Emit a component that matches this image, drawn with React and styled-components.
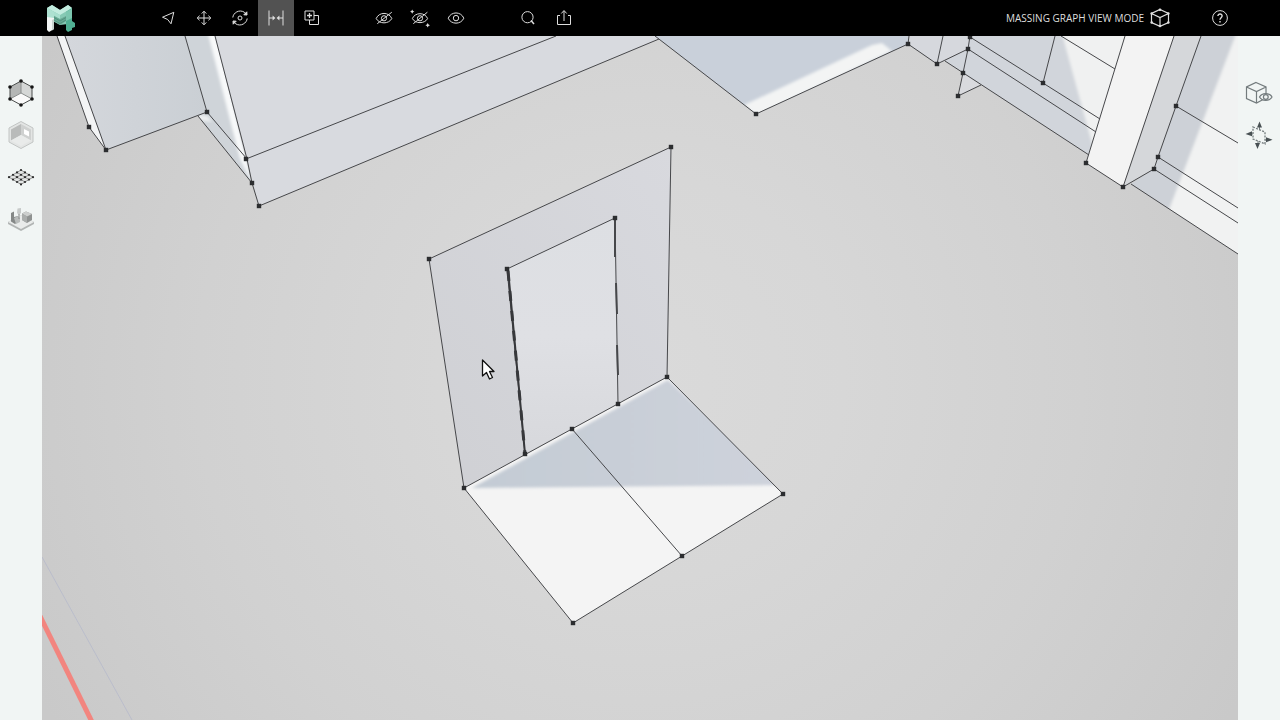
import React from "react";
import styled, { createGlobalStyle } from "styled-components";

const GlobalStyle = createGlobalStyle`
  * { box-sizing: border-box; }
  body { margin: 0; background: #f1f5f4; font-family: "Open Sans", "Noto Sans", sans-serif; }
`;

const Shell = styled.div`
  display: flex;
  flex-direction: column;
  height: 100vh;
`;

const TopBar = styled.header`
  display: flex;
  align-items: center;
  flex: none;
  height: 36px;
  padding: 0 42px;
  background: #000;
  color: #dedede;
`;

const Logo = styled.a`
  display: flex;
  width: 36px;
  margin-right: 72px;
`;

const Tools = styled.nav`
  display: flex;
  gap: 36px;
  margin-right: auto;
`;

const ToolGroup = styled.div`
  display: flex;
`;

const ToolButton = styled.button`
  display: flex;
  align-items: center;
  justify-content: center;
  width: 36px;
  height: 36px;
  padding: 0;
  border: 0;
  color: inherit;
  background: ${(p) => (p.$active ? "#525252" : "transparent")};
`;

const ModeButton = styled.button`
  display: flex;
  align-items: center;
  gap: 6px;
  height: 36px;
  margin-right: 32px;
  padding: 0;
  border: 0;
  background: transparent;
  color: inherit;
  font-family: inherit;
  font-size: 10px;
  line-height: 16px;
  white-space: nowrap;
`;

const Workspace = styled.div`
  display: flex;
  flex: 1;
  min-height: 0;
`;

const SideBar = styled.aside`
  display: flex;
  flex-direction: column;
  flex: none;
  width: 42px;
  padding-top: 36px;
  background: #f1f5f4;
`;

const SideButton = styled.button`
  display: flex;
  align-items: center;
  justify-content: center;
  width: 42px;
  height: 42px;
  padding: 0;
  border: 0;
  background: transparent;
`;

const Viewport = styled.main`
  flex: 1;
  min-width: 0;
  background: #d2d2d2;
`;

const SceneSvg = styled.svg`
  display: block;
  width: 100%;
  height: 100%;
`;

const LineIcon = ({ size = 20, children }) => (
  <svg
    width={size}
    height={size}
    viewBox="0 0 20 20"
    fill="none"
    stroke="currentColor"
    strokeWidth="1"
    strokeLinejoin="round"
    aria-hidden="true"
  >
    {children}
  </svg>
);

const ICONS = {
  select: <path d="M4.5 9.2 15.8 4.3 13 15.8 9.7 11.5Z" />,
  move: (
    <>
      <path d="M3.5 10H16.5M10 3.5V16.5" />
      <path d="M7.7 5.6 10 3.2 12.3 5.6M7.7 14.4 10 16.8 12.3 14.4M5.6 7.7 3.2 10 5.6 12.3M14.4 7.7 16.8 10 14.4 12.3" />
    </>
  ),
  rotate: (
    <>
      <circle cx="10" cy="10" r="2" />
      <path d="M2.8 9.5C3.2 4.8 9.3 1 14.3 4.2L16 6M17.2 10.5C16.8 15.2 10.7 19 5.7 15.8L4 14" />
      <path d="M13.8 6.8 17 7 16.8 3.8ZM6.2 13.2 3 13 3.2 16.2Z" fill="currentColor" />
    </>
  ),
  measure: (
    <>
      <path d="M3 2.5V17.5M17 2.5V17.5M3 10H8M12 10H17" />
      <path d="M6.6 7.6 9.4 10 6.6 12.4ZM13.4 7.6 10.6 10 13.4 12.4Z" fill="currentColor" stroke="none" />
    </>
  ),
  duplicate: (
    <>
      <path d="M3 3H12V12H3ZM7.5 12V16.5H16.5V7.5H12" />
      <path d="M5 7.5H10M7.500 5V10" strokeWidth="1.3" />
    </>
  ),
  hide: (
    <>
      <path d="M2.2 10.5C5 3.7 15 3.7 17.8 10.5C15 16.3 5 16.3 2.2 10.5Z" />
      <circle cx="10" cy="10.3" r="2.6" />
      <path d="M3.3 15.7 17.8 4.2" />
    </>
  ),
  hideOthers: (
    <>
      <path d="M2.4 10.5C5 4.1 15 4.1 17.6 10.5C15 16 5 16 2.4 10.5Z" />
      <circle cx="10" cy="10.3" r="2.6" />
      <path d="M3.3 15.7 17.4 4.2" />
      <path
        d="M2.200 1.400 3 2.900 4.400 3.600 3 4.300 2.200 5.800 1.400 4.300 0 3.600 1.400 2.900ZM17.700 15 18.500 16.500 20 17.200 18.500 17.900 17.700 19.400 16.900 17.900 15.400 17.200 16.900 16.500Z"
        fill="currentColor"
        stroke="none"
      />
    </>
  ),
  show: (
    <>
      <path d="M2.2 10.2C5 3.2 15 3.2 17.8 10.2C15 16.8 5 16.8 2.2 10.2Z" />
      <circle cx="10" cy="10.1" r="2.7" />
    </>
  ),
  search: (
    <>
      <circle cx="9.5" cy="9.2" r="5.6" />
      <path d="M13 12.600 16 16" strokeWidth="1.500" />
    </>
  ),
  share: (
    <>
      <path d="M6 7.5H3.5V16.5H16.5V7.5H14M10 13V3" />
      <path d="M7.3 5.5 10 2.5 12.7 5.5" />
    </>
  ),
  help: (
    <>
      <circle cx="10" cy="10" r="7.4" />
      <path d="M7.9 8.1C7.9 5.2 12.3 5.4 12.1 8C12 9.7 10 9.7 10 11.7M10 13.1V14.6" strokeWidth="1.4" />
    </>
  ),
};

const TOOL_GROUPS = [
  [
    ["select", "Select"],
    ["move", "Move"],
    ["rotate", "Rotate"],
    ["measure", "Measure"],
    ["duplicate", "Duplicate"],
  ],
  [
    ["hide", "Hide"],
    ["hideOthers", "Hide others"],
    ["show", "Show all"],
  ],
  [
    ["search", "Search"],
    ["share", "Share"],
  ],
];

const LogoMark = () => (
  <svg width="36" height="36" viewBox="0 0 36 36" aria-hidden="true">
    <path d="M5 8 10 5 18 10 26 5 30 8V22L26 24 18 25 5 18Z" fill="#86c9b4" />
    <path d="M5 8 10 5 18 10 26 5 30 8 18 15Z" fill="#c3ecdf" />
    <path d="M5 8 18 15V19L5 12Z" fill="#a9dfce" />
    <path d="M12 16 18 19 24 16V21L18 25 12 21Z" fill="#68a893" />
    <path d="M12 17.500 18 21 24 17.500M12 20 18 23.500 24 20" fill="none" stroke="#4b8c78" strokeWidth=".8" />
    <path d="M24 12 30 8V21L33 23V27L30 28V30L26 32 24 30Z" fill="#50ae92" />
    <path d="M24 12 30 8.500V18L24 21Z" fill="#7cc6af" />
    <path d="M5 8 12 12V20L5 20Z" fill="#aee1d1" />
    <path d="M5 17 12 18V29L7 32 5 30Z" fill="#f2f5f4" />
    <path d="M10 20 12 19V29L10 30.500Z" fill="#c9d3cf" />
  </svg>
);

const CubeIcon = () => (
  <svg width="20" height="20" viewBox="0 0 20 20" aria-hidden="true">
    <path
      d="M10 1.5 18.5 5.5V14.5L10 18.3 1.5 14.5V5.5ZM1.5 5.5 10 9.5 18.5 5.5M10 9.5V18.3"
      fill="none"
      stroke="currentColor"
      strokeWidth="1.2"
    />
    {[[10, 1.7], [18.3, 5.5], [18.3, 14.5], [10, 18], [1.7, 14.5], [1.7, 5.5]].map(([x, y]) => (
      <circle key={`${x}-${y}`} cx={x} cy={y} r="1.3" fill="currentColor" />
    ))}
  </svg>
);

const GraphIcon = () => (
  <svg width="30" height="30" viewBox="0 0 30 30" aria-hidden="true">
    <path d="M15 3 26 9V21L15 15Z" fill="#d5d7d6" />
    <path d="M15 3 4 9V21L15 15Z" fill="#b5b7b6" />
    <path d="M4 21 15 15 26 21 15 27Z" fill="#fafafa" />
    <path d="M15 3V15L4 21M15 15 26 21" fill="none" stroke="#8a8d8c" strokeWidth="1" />
    <path d="M15 3 26 9V21L15 27 4 21V9Z" fill="none" stroke="#4a4d4c" strokeWidth="1" />
    {[[15, 3], [26, 9], [26, 21], [15, 27], [4, 21], [4, 9]].map(([x, y]) => (
      <circle key={`${x}-${y}`} cx={x} cy={y} r="1.8" fill="#151515" />
    ))}
  </svg>
);

const SolidIcon = () => (
  <svg width="30" height="30" viewBox="0 0 30 30" aria-hidden="true">
    <path d="M15 1.5 27 8V22L15 28.5 3 22V8Z" fill="#e3e5e4" stroke="#c2c5c4" strokeWidth="1" />
    <path d="M15 4 5 9.5V20.5L15 15Z" fill="#b9bbba" />
    <path d="M15 4 25 9.5V20.5L15 15Z" fill="#cfd1d0" />
    <path d="M5 20.5 15 15 25 20.5 15 26Z" fill="#e9ebea" />
    <path d="M18 9 23 11.500V16.500L18 14Z" fill="#fff" />
  </svg>
);

const GridIcon = () => {
  const dots = [];
  for (let i = 0; i < 4; i += 1) {
    for (let j = 0; j < 4; j += 1) {
      dots.push([15 + (i - j) * 4, 8 + (i + j) * 2.4]);
    }
  }
  return (
    <svg width="30" height="30" viewBox="0 0 30 30" aria-hidden="true">
      <path d="M15 8 27 15.2 15 22.4 3 15.2Z" fill="#e3e5e4" />
      <path
        d="M15 8 27 15.2 15 22.4 3 15.2ZM11 10.4 23 17.6M7 12.8 19 20M19 10.4 7 17.6M23 12.8 11 20"
        fill="none"
        stroke="#777"
        strokeWidth=".8"
      />
      {dots.map(([x, y]) => (
        <circle key={`${x}-${y}`} cx={x} cy={y} r="1.1" fill="#2b2b2b" />
      ))}
    </svg>
  );
};

const FurnitureIcon = () => (
  <svg width="30" height="30" viewBox="0 0 30 30" aria-hidden="true">
    <path d="M2 18 15 11 28 18V20L15 27 2 20Z" fill="#b2b5b4" />
    <path d="M2 18 15 11 28 18 15 25Z" fill="#e9ebea" />
    <path d="M5 9 8 7.500V13L12 12V18L9 20 5 17.500Z" fill="#858887" />
    <path d="M8 14 12 12 14 14V18L10 20Z" fill="#b9bcbb" />
    <path d="M11.500 4.500 15 4V9L13 11 11 9Z" fill="#c7cac9" />
    <path d="M13 10V15" stroke="#888b8a" strokeWidth="1" />
    <path d="M16 9.5 20 7.5 26 10V16L21 19 16 16Z" fill="#8f9291" />
    <path d="M16 9.5 20 7.5 26 10 21 12.5Z" fill="#cdcfce" />
    <path d="M16 9.5 21 12.5V19L16 16Z" fill="#aaadac" />
  </svg>
);

const VisibilityIcon = () => (
  <svg width="30" height="30" viewBox="0 0 30 30" fill="none" stroke="#737b7d" strokeWidth="1.2" aria-hidden="true">
    <path d="M12 4.500 22 9V20L12.5 25 2.5 20.500V9ZM2.5 9 12.5 13.500 22 9M12.5 13.500V25" />
    <path d="M15.5 19C18 14.500 25.500 14.500 28 19C25.500 23.500 18 23.500 15.500 19Z" fill="#f1f5f4" />
    <circle cx="21.8" cy="19" r="2.4" />
  </svg>
);

const SectionIcon = () => (
  <svg width="30" height="30" viewBox="0 0 30 30" fill="none" stroke="#737b7d" aria-hidden="true">
    <path d="M9 7 21 12V24L9 19Z" strokeWidth="1.300" strokeDasharray="2 1.300" />
    <path d="M15.5 6V10M14 21V25M6 14H9M21 20H24" />
    <path
      d="M15.500 1.500 18 7.500H13ZM13.500 29 16 23H11ZM1.500 14 8 11.300V16.300ZM28.500 19.700 22 17.200V22.200Z"
      fill="#485053"
      stroke="none"
    />
  </svg>
);

const EDGES = [
  "M57 36 89 127 106 150M65 36 106 150 207 112 185 36",
  "M207 112 247 159M198 116 252 183M215 36 247 159 252 183 259 206",
  "M246 159 556 36M259 206 659 39M655 36 756 114 908 44 909 36",
  "M908 44 937 64 943 36M937 64 968 49M945 61 1089 155",
  "M970 36 968 49 963 73 958 96 981 85M970 37 1100 119M968 49 1096 132",
  "M1043 83 1055 36M1061 36 1115 69M1125 36 1086 163 1123 187 1174 36",
  "M1123 187 1154 169 1158 157 1176 106 1201 36M1131 184 1238 254",
  "M1158 157 1238 208M1154 169 1238 223M1176 106 1238 143",
];

const NODES = [
  [89, 127], [106, 150], [207, 112], [246, 159], [252, 183], [259, 206],
  [756, 114], [908, 44], [937, 64], [970, 37], [968, 49], [963, 73], [958, 96], [1043, 83],
  [1086, 163], [1123, 187], [1154, 169], [1158, 157], [1176, 106],
  [671, 147], [429, 259], [615, 218], [507, 269], [464, 488], [525, 454], [572, 429],
  [618, 404], [667, 377], [783, 494], [682, 556], [573, 623],
];

const Node = ({ x, y }) => <rect x={x - 2} y={y - 2} width="4" height="4" fill="#2c2d30" stroke="#2c2d30" strokeWidth=".4" />;

const Scene = () => (
  <SceneSvg viewBox="42 36 1196 684" preserveAspectRatio="xMidYMid slice" role="img" aria-label="Massing model">
    <defs>
      <radialGradient id="ground" gradientUnits="userSpaceOnUse" cx="640" cy="378" r="680">
        <stop offset="0" stopColor="#dadada" />
        <stop offset=".3" stopColor="#d7d7d7" />
        <stop offset=".65" stopColor="#d1d1d1" />
        <stop offset="1" stopColor="#c9c9c9" />
      </radialGradient>
      <linearGradient id="leftPanel">
        <stop offset="0" stopColor="#d4d7dc" />
        <stop offset="1" stopColor="#cacfd4" />
      </linearGradient>
      <linearGradient id="wall" x1="0" y1="1" x2="1" y2="0">
        <stop offset="0" stopColor="#cfd0d4" />
        <stop offset="1" stopColor="#d8d9de" />
      </linearGradient>
      <linearGradient id="door" x1="0" y1="1" x2="0" y2="0">
        <stop offset="0" stopColor="#d7d8dc" />
        <stop offset=".5" stopColor="#dfe0e4" />
        <stop offset="1" stopColor="#dddfe3" />
      </linearGradient>
      <linearGradient id="shade">
        <stop offset="0" stopColor="#c3cbd4" />
        <stop offset="1" stopColor="#ced2db" />
      </linearGradient>
      <filter id="softEdge" x="-10%" y="-10%" width="120%" height="120%">
        <feGaussianBlur stdDeviation="1.5" />
      </filter>
      <clipPath id="floorClip">
        <path d="M464 488 667 377 783 494 573 623Z" />
      </clipPath>
      <clipPath id="backFloorClip">
        <path d="M655 36 756 114 908 44 909 36Z" />
      </clipPath>
      <clipPath id="returnClip">
        <path d="M185 36H215L252 183 198 116 207 112Z" />
      </clipPath>
      <clipPath id="bayLeftClip">
        <path d="M970 36H1125L1089 155 945 61 968 49Z" />
      </clipPath>
      <clipPath id="bayRightClip">
        <path d="M1201 36H1238V254L1131 184 1154 169Z" />
      </clipPath>
    </defs>

    <rect x="42" y="36" width="1196" height="684" fill="url(#ground)" />

    <path d="M57 36H65L106 150 89 127Z" fill="#f3f4f5" />
    <path d="M65 36H185L207 112 106 150Z" fill="url(#leftPanel)" />
    <g clipPath="url(#returnClip)">
      <path d="M185 36H215L252 183 198 116Z" fill="#cfd4d9" />
      <path d="M207 30H216L252 183 240 159Z" fill="#f8f9fa" filter="url(#softEdge)" />
      <path d="M192 114 207 116 212 122 200 120Z" fill="#eef0f1" filter="url(#softEdge)" />
    </g>
    <path d="M215 36H655L659 39 259 206Z" fill="#d8dadf" />

    <path d="M655 36 756 114 908 44 909 36Z" fill="#c9d0da" />
    <g clipPath="url(#backFloorClip)">
      <path d="M744 105 872 45 882 43 892 51 756 116Z" fill="#f3f4f4" filter="url(#softEdge)" />
    </g>

    <path d="M909 36H970L968 49 937 64 908 44Z" fill="#d6d8dd" />
    <path d="M963 73 981 85 958 96Z" fill="#d9dade" />
    <g clipPath="url(#bayLeftClip)">
      <path d="M940 36H1130V160H940Z" fill="#d1d5db" />
      <path d="M1062 34H1130L1096 158Z" fill="#f0f1f1" filter="url(#softEdge)" />
    </g>
    <path d="M1125 36H1174L1123 187 1086 163Z" fill="#f3f3f3" />
    <path d="M1174 36H1201L1154 169 1123 187Z" fill="#d5d7da" />
    <g clipPath="url(#bayRightClip)">
      <rect x="1120" y="36" width="120" height="220" fill="#cdd1d7" />
      <path d="M1236 34H1246V266L1168 212Z" fill="#f1f2f2" filter="url(#softEdge)" />
    </g>

    <path d="M429 259 671 147 667 377 464 488Z" fill="url(#wall)" />
    <path d="M507 269 615 218 618 404 525 454Z" fill="url(#door)" />
    <path d="M464 488 667 377 783 494 573 623Z" fill="#f4f4f4" />
    <g clipPath="url(#floorClip)">
      <path d="M472 488 668 380 782 485Z" fill="url(#shade)" filter="url(#softEdge)" />
    </g>

    <path d="M42 557 132 720" stroke="#babdcb" strokeWidth="1" fill="none" />
    <path d="M40 616 93 724" stroke="#f2857f" strokeWidth="5" fill="none" />

    <g fill="none" stroke="#46474a" strokeWidth="1">
      {EDGES.map((d) => (
        <path key={d} d={d} />
      ))}
      <path d="M464 488 429 259 671 147 667 377M525 454 507 269 615 218 618 404" />
      <path d="M464 488 667 377 783 494 573 623ZM572 429 682 556" />
      <path d="M508 269 525 454" strokeWidth="2" stroke="#37383b" />
      <path d="M508 271 525 454" strokeWidth="3" strokeDasharray="10 10" stroke="#37383b" />
      <path d="M615 218V257M616 283 617 314M617 345 618 375" strokeWidth="2" />
    </g>

    {NODES.map(([x, y]) => (
      <Node key={`${x}-${y}`} x={x} y={y} />
    ))}

    <path
      d="M482.500 360V376L486.500 372.500 489.500 379 492.500 377.500 489.500 371.500H494Z"
      fill="#fff"
      stroke="#111"
      strokeWidth="1.3"
      strokeLinejoin="round"
    />
  </SceneSvg>
);

export default function App() {
  return (
    <>
      <GlobalStyle />
      <Shell>
        <TopBar>
          <Logo href="#" aria-label="Home">
            <LogoMark />
          </Logo>
          <Tools aria-label="Tools">
            {TOOL_GROUPS.map((group) => (
              <ToolGroup key={group[0][0]}>
                {group.map(([name, label]) => (
                  <ToolButton key={name} type="button" aria-label={label} $active={name === "measure"}>
                    <LineIcon>{ICONS[name]}</LineIcon>
                  </ToolButton>
                ))}
              </ToolGroup>
            ))}
          </Tools>
          <ModeButton type="button">
            MASSING GRAPH VIEW MODE
            <CubeIcon />
          </ModeButton>
          <ToolButton type="button" aria-label="Help">
            <LineIcon>{ICONS.help}</LineIcon>
          </ToolButton>
        </TopBar>
        <Workspace>
          <SideBar aria-label="View modes">
            <SideButton type="button" aria-label="Graph view"><GraphIcon /></SideButton>
            <SideButton type="button" aria-label="Solid view"><SolidIcon /></SideButton>
            <SideButton type="button" aria-label="Floor grid"><GridIcon /></SideButton>
            <SideButton type="button" aria-label="Furniture"><FurnitureIcon /></SideButton>
          </SideBar>
          <Viewport>
            <Scene />
          </Viewport>
          <SideBar aria-label="Display options">
            <SideButton type="button" aria-label="Object visibility"><VisibilityIcon /></SideButton>
            <SideButton type="button" aria-label="Section box"><SectionIcon /></SideButton>
          </SideBar>
        </Workspace>
      </Shell>
    </>
  );
}
